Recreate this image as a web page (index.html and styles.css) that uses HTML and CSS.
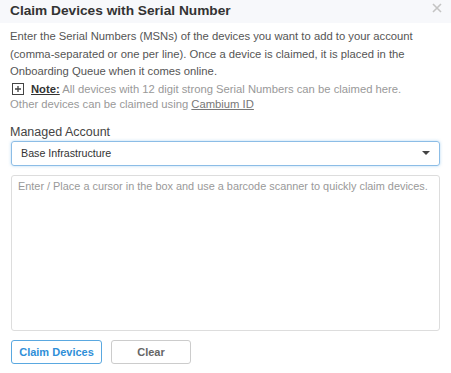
FILE: index.html
```html
<!DOCTYPE html>
<html>
<head>
<meta charset="utf-8">
<link rel="stylesheet" href="styles.css">
</head>
<body>
<div class="dialog">
  <div class="header">
    <span class="title">Claim Devices with Serial Number</span>
    <span class="close" aria-label="Close"><svg width="10" height="10" viewBox="0 0 10 10"><path d="M1 1l8 8M9 1l-8 8" stroke="#c4c4c4" stroke-width="1.6"/></svg></span>
  </div>
  <div class="body">
    <p class="intro">Enter the Serial Numbers (MSNs) of the devices you want to add to your account (comma-separated or one per line). Once a device is claimed, it is placed in the Onboarding Queue when it comes online.</p>
    <p class="note"><span class="plus"><svg width="12" height="12" viewBox="0 0 12 12"><rect x="0.5" y="0.5" width="11" height="11" fill="none" stroke="#444"/><path d="M6 3v6M3 6h6" stroke="#444" stroke-width="1.3"/></svg></span><span class="note-label">Note:</span> All devices with 12 digit strong Serial Numbers can be claimed here.<br>Other devices can be claimed using <span class="link">Cambium ID</span></p>
    <label class="label">Managed Account</label>
    <div class="select"><span>Base Infrastructure</span><span class="caret"></span></div>
    <div class="textarea">Enter / Place a cursor in the box and use a barcode scanner to quickly claim devices.</div>
    <div class="actions">
      <button class="btn primary">Claim Devices</button>
      <button class="btn">Clear</button>
    </div>
  </div>
</div>
</body>
</html>
```
FILE: styles.css
```css
* { box-sizing: border-box; }
html, body { margin: 0; padding: 0; background: #fff; }
body { font-family: "Liberation Sans", Arial, sans-serif; width: 451px; height: 373px; overflow: hidden; }
.dialog { width: 451px; }
.header { height: 23px; background: #f7f8fb; display: flex; align-items: center; justify-content: space-between; padding: 0 9px 0 10px; }
.title { font-size: 13.7px; font-weight: bold; color: #333; margin-top: -2px; }
.close { display: flex; align-self: flex-start; margin-top: 3px; }
.close svg { display: block; }
.body { padding: 5px 11px 0 10px; }
.intro { margin: 0; font-size: 11.25px; line-height: 17.5px; color: #555; }
.note { margin: 1px 0 0; font-size: 11.25px; line-height: 15.5px; color: #999; }
.plus { display: inline-block; vertical-align: -2px; margin: 0 7px 0 2px; }
.plus svg { display: block; }
.note-label { font-weight: bold; color: #333; text-decoration: underline; }
.link { color: #777; text-decoration: underline; }
.label { display: block; margin-top: 12px; font-size: 12.5px; color: #444; line-height: 14px; }
.select { margin: 2px 0 0 1px; height: 25px; border: 1px solid #8cbde6; border-radius: 3px; box-shadow: 0 0 3px rgba(102,175,233,0.5); display: flex; align-items: center; justify-content: space-between; padding: 0 9px 0 9px; font-size: 10.7px; color: #333; }
.caret { width: 0; height: 0; border-left: 4px solid transparent; border-right: 4px solid transparent; border-top: 4px solid #444; }
.textarea { margin: 9px 0 0 1px; height: 156px; border: 1px solid #ddd; border-radius: 3px; padding: 4px 6px; font-size: 10.9px; color: #999; }
.actions { display: flex; gap: 9px; margin: 9px 0 0 1px; }
.btn { font-family: "Liberation Sans", Arial, sans-serif; height: 24px; border: 1px solid #ccc; background: #fff; border-radius: 3px; font-size: 11px; color: #555; padding: 0; width: 80px; }
.btn.primary { width: 91px; border-color: #5aa8e0; color: #2f8fd8; font-weight: bold; }
.btn:not(.primary) { font-weight: bold; color: #666; }
```
